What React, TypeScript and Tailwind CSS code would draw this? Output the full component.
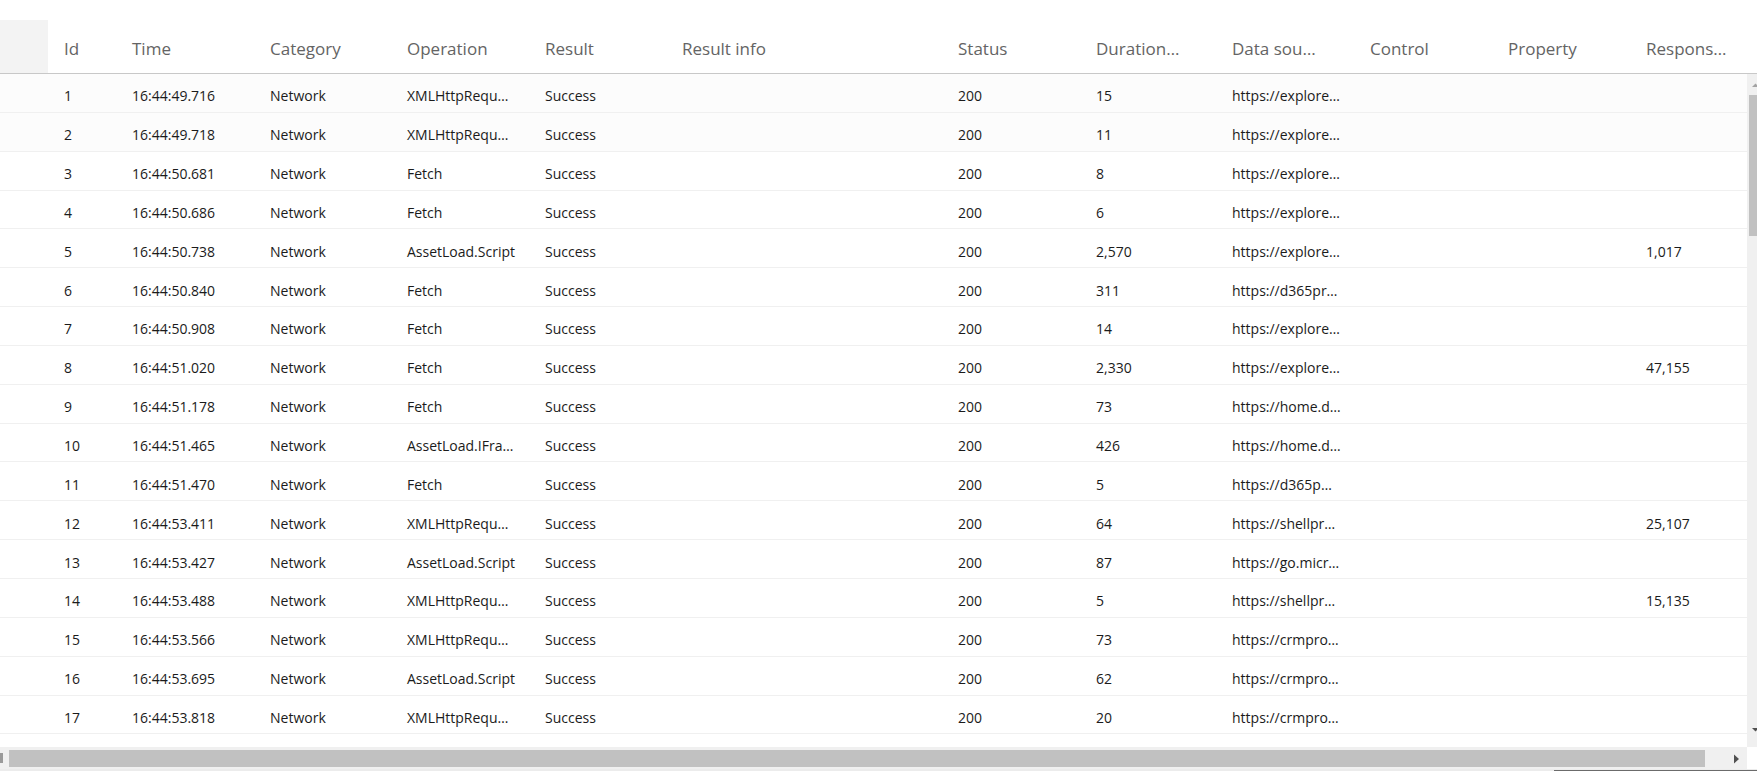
const cols =
  'grid grid-cols-[48px_68px_138px_137px_138px_137px_276px_138px_136px_138px_138px_138px_138px]';

type Row = {
  id: number;
  time: string;
  op: string;
  duration: string;
  source: string;
  response?: string;
};

const rows: Row[] = [
  { id: 1, time: '16:44:49.716', op: 'XMLHttpRequ…', duration: '15', source: 'https://explore…' },
  { id: 2, time: '16:44:49.718', op: 'XMLHttpRequ…', duration: '11', source: 'https://explore…' },
  { id: 3, time: '16:44:50.681', op: 'Fetch', duration: '8', source: 'https://explore…' },
  { id: 4, time: '16:44:50.686', op: 'Fetch', duration: '6', source: 'https://explore…' },
  { id: 5, time: '16:44:50.738', op: 'AssetLoad.Script', duration: '2,570', source: 'https://explore…', response: '1,017' },
  { id: 6, time: '16:44:50.840', op: 'Fetch', duration: '311', source: 'https://d365pr…' },
  { id: 7, time: '16:44:50.908', op: 'Fetch', duration: '14', source: 'https://explore…' },
  { id: 8, time: '16:44:51.020', op: 'Fetch', duration: '2,330', source: 'https://explore…', response: '47,155' },
  { id: 9, time: '16:44:51.178', op: 'Fetch', duration: '73', source: 'https://home.d…' },
  { id: 10, time: '16:44:51.465', op: 'AssetLoad.IFra…', duration: '426', source: 'https://home.d…' },
  { id: 11, time: '16:44:51.470', op: 'Fetch', duration: '5', source: 'https://d365p…' },
  { id: 12, time: '16:44:53.411', op: 'XMLHttpRequ…', duration: '64', source: 'https://shellpr…', response: '25,107' },
  { id: 13, time: '16:44:53.427', op: 'AssetLoad.Script', duration: '87', source: 'https://go.micr…' },
  { id: 14, time: '16:44:53.488', op: 'XMLHttpRequ…', duration: '5', source: 'https://shellpr…', response: '15,135' },
  { id: 15, time: '16:44:53.566', op: 'XMLHttpRequ…', duration: '73', source: 'https://crmpro…' },
  { id: 16, time: '16:44:53.695', op: 'AssetLoad.Script', duration: '62', source: 'https://crmpro…' },
  { id: 17, time: '16:44:53.818', op: 'XMLHttpRequ…', duration: '20', source: 'https://crmpro…' },
];

const headers = [
  'Id',
  'Time',
  'Category',
  'Operation',
  'Result',
  'Result info',
  'Status',
  'Duration…',
  'Data sou…',
  'Control',
  'Property',
  'Respons…',
];

function Cell({ children, head }: { children?: React.ReactNode; head?: boolean }) {
  return (
    <div
      className={`flex items-center overflow-hidden whitespace-nowrap pl-4 ${head ? 'pt-[4px]' : 'pt-[6px]'}`}
    >
      {children}
    </div>
  );
}

export default function App() {
  return (
    <div className="flex h-[771px] w-[1757px] flex-col overflow-hidden bg-white font-['Open_Sans',sans-serif]">
      <div className="h-[20px] shrink-0" />

      {/* Column headers */}
      <div className="shrink-0 overflow-hidden border-b border-[#c8c8c8]">
        <div className={`${cols} h-[53px] text-[17px] text-[#646464]`}>
          <div className="bg-[#f3f3f3]" />
          {headers.map((h) => (
            <Cell key={h} head>
              {h}
            </Cell>
          ))}
        </div>
      </div>

      {/* Body + vertical scrollbar */}
      <div className="flex min-h-0 flex-1">
        <div className="min-w-0 flex-1 overflow-hidden text-[14px] text-[#1b1b1b]">
          {rows.map((r) => (
            <div
              key={r.id}
              className={`${cols} h-[38.85px] border-b border-[#f0f0f0] ${r.id <= 2 ? 'bg-[#fcfcfc]' : 'bg-white'}`}
            >
              <div />
              <Cell>{r.id}</Cell>
              <Cell>{r.time}</Cell>
              <Cell>Network</Cell>
              <Cell>{r.op}</Cell>
              <Cell>Success</Cell>
              <Cell />
              <Cell>200</Cell>
              <Cell>{r.duration}</Cell>
              <Cell>{r.source}</Cell>
              <Cell />
              <Cell />
              <Cell>{r.response}</Cell>
            </div>
          ))}
        </div>

        <div className="relative w-[10px] shrink-0 overflow-hidden bg-[#f0f0f0]">
          <svg width="17" height="21" className="block">
            <polygon points="5,13 8.5,9.5 12,13" fill="#a3a3a3" />
          </svg>
          <div className="ml-[2px] h-[141px] w-[13px] bg-[#c1c1c1]" />
          <svg width="17" height="12" className="absolute bottom-[10px] left-0">
            <polygon points="5,3 12,3 8.5,6.5" fill="#505050" />
          </svg>
        </div>
      </div>

      {/* Horizontal scrollbar */}
      <div className="flex h-[22px] shrink-0">
        <div className="relative flex flex-1 items-start bg-[#f0f0f0]">
          <div className="mt-[6px] h-[10px] w-[3px] bg-[#9a9a9a]" />
          <div className="ml-[6px] mt-[3px] h-[17px] w-[1696px] bg-[#c1c1c1]" />
          <svg width="10" height="12" className="absolute left-[1731px] top-[6px]">
            <polygon points="3,1.5 8,6 3,10.5" fill="#505050" />
          </svg>
        </div>
        <div className="w-[10px] bg-white" />
      </div>
      <div className="flex h-[2px] shrink-0">
        <div className="w-[1554px] bg-[#ececec]" />
        <div className="flex flex-1 flex-col">
          <div className="h-[1px] bg-[#ececec]" />
          <div className="h-[1px] bg-[#6b6b6b]" />
        </div>
      </div>
    </div>
  );
}
